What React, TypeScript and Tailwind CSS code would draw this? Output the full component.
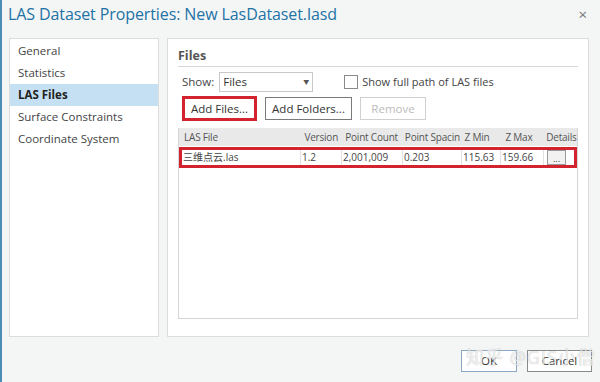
import React from "react";

const font = { fontFamily: '"Open Sans", "Noto Sans CJK SC", sans-serif' };

const navItems = ["General", "Statistics", "LAS Files", "Surface Constraints", "Coordinate System"];

const columns = [
  { label: "LAS File", w: "w-[122px]" },
  { label: "Version", w: "w-[41px]" },
  { label: "Point Count", w: "w-[61px]" },
  { label: "Point Spacin", w: "w-[59px]" },
  { label: "Z Min", w: "w-[39px]" },
  { label: "Z Max", w: "w-[43px]" },
  { label: "Details", w: "w-[35px]" },
];

const row = ["三维点云.las", "1.2", "2,001,009", "0.203", "115.63", "159.66"];

export default function App() {
  return (
    <div
      className="relative w-[600px] h-[382px] bg-[#f4f5f5] border-l-2 border-[#4b8db3] text-[#333] overflow-hidden"
      style={font}
    >
      {/* 제목 표시줄 */}
      <div className="flex items-center justify-between h-[28px] pl-[6px] pr-[13px]">
        <span className="text-[16px] text-[#2272a6] tracking-[-0.1px]">
          LAS Dataset Properties: New LasDataset.lasd
        </span>
        <span className="text-[15px] text-[#777]">×</span>
      </div>

      <div className="flex gap-[8px] pl-[7px] pt-[10px] h-[309px]">
        {/* 왼쪽 목록 */}
        <div className="w-[150px] h-[299px] bg-white border border-[#dcdcdc] pt-[1px]">
          {navItems.map((item) => (
            <div
              key={item}
              className={
                item === "LAS Files"
                  ? "h-[22px] pl-[8px] flex items-center text-[11.5px] font-bold text-[#222] bg-[#c5e0f3]"
                  : "h-[22px] pl-[8px] flex items-center text-[11.5px] text-[#444]"
              }
            >
              {item}
            </div>
          ))}
        </div>

        {/* 오른쪽 패널 */}
        <div className="w-[422px] h-[299px] bg-white border border-[#dcdcdc] px-[10px] pt-[8px]">
          <div className="text-[12.5px] font-bold text-[#555] h-[20px] leading-[18px] border-b border-[#d6d6d6]">
            Files
          </div>

          <div className="flex items-center h-[22px] mt-[4px] pl-[4px] text-[11.5px]">
            <span className="text-[#444]">Show:</span>
            <div className="ml-[5px] w-[94px] h-[20px] border border-[#c8c8c8] flex items-center justify-between px-[3px]">
              <span>Files</span>
              <span className="text-[6px] text-[#555]">▼</span>
            </div>
            <div className="ml-[31px] w-[14px] h-[14px] border border-[#8a8a8a]" />
            <span className="ml-[4px] text-[11px] text-[#444]">Show full path of LAS files</span>
          </div>

          <div className="flex items-center h-[25px] mt-[3px] pl-[4px] text-[11.5px]">
            <div className="border-[3px] border-[#d2232e] h-[25px] w-[75px] flex items-center justify-center bg-white">
              Add Files...
            </div>
            <div className="ml-[8px] border border-[#7a7a7a] h-[23px] w-[87px] flex items-center justify-center">
              Add Folders...
            </div>
            <div className="ml-[8px] border border-[#d0d0d0] h-[23px] w-[66px] flex items-center justify-center text-[#bbb]">
              Remove
            </div>
          </div>

          <div className="mt-[7px] h-[191px] border border-[#d6d6d6] border-t-0 flex flex-col text-[10px]">
            <div className="flex h-[18px] bg-[#e9e9e9] text-[#555] tracking-[-0.2px]">
              {columns.map((c, i) => (
                <div
                  key={c.label}
                  className={`${c.w} flex items-center whitespace-nowrap ${
                    i === 0 ? "pl-[5px]" : i === 5 ? "pl-[6px]" : i === 3 ? "pl-[3px]" : "pl-[4px]"
                  }`}
                >
                  {c.label}
                </div>
              ))}
            </div>
            <div className="flex h-[21px] mt-[1px] border-[3px] border-[#d2232e] w-[398px] text-[#444]">
              {row.map((v, i) => (
                <div
                  key={i}
                  className={`${i === 0 ? "w-[119px]" : columns[i].w} pl-[1px] flex items-center whitespace-nowrap border-r border-[#e2e2e2]`}
                >
                  {v}
                </div>
              ))}
              <div className="flex items-center pl-[3px]">
                <div className="w-[19px] h-[15px] border border-[#9a9a9a] bg-[#f2f2f2] flex items-end justify-center text-[9px] leading-[11px]">
                  ...
                </div>
              </div>
            </div>
          </div>
        </div>
      </div>

      {/* 하단 버튼 */}
      <div className="flex justify-end gap-[10px] pr-[8px] pt-[13px] text-[11.5px]">
        <div className="w-[56px] h-[22px] border border-[#8aa8c4] flex items-center justify-center bg-white">
          OK
        </div>
        <div className="w-[65px] h-[22px] border border-[#8a8a8a] flex items-center justify-center bg-white">
          Cancel
        </div>
      </div>

      {/* 워터마크 */}
      <div className="absolute left-[464px] top-[344px] whitespace-nowrap text-[18px] text-white/75 tracking-[1px] pointer-events-none [text-shadow:0_0_1px_rgba(0,0,0,0.3)]">
        知乎 @GIS小僧
      </div>
    </div>
  );
}
